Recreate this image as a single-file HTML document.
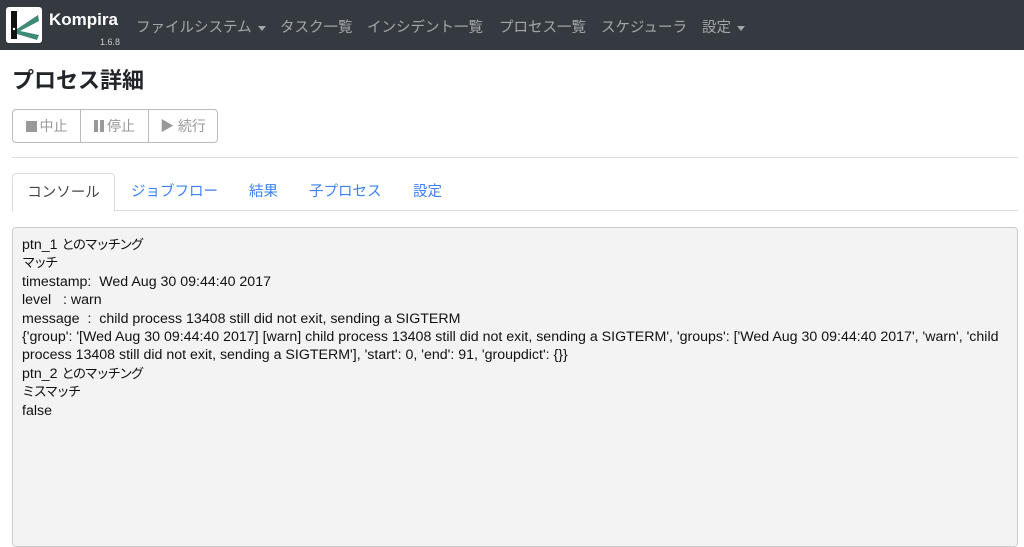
<!DOCTYPE html>
<html><head><meta charset="utf-8"><style>
*{box-sizing:border-box;margin:0;padding:0}
body{width:1024px;height:531px;overflow:hidden;background:#fff;font-family:"Liberation Sans","Noto Sans CJK JP",sans-serif;color:#212529}
.nav{height:50px;background:#343a40;position:relative}
.logo{position:absolute;left:6px;top:7px;width:36px;height:36px;background:#fff;border-radius:3px}
.brand{position:absolute;left:49px;top:10px;color:#fff;font-weight:bold;font-size:17px}
.ver{position:absolute;left:100px;top:37px;color:#ccc;font-size:9px}
.ni{position:absolute;top:16px;color:rgba(255,255,255,.55);font-size:14.5px}
.car{display:inline-block;border-left:4px solid transparent;border-right:4px solid transparent;border-top:5px solid rgba(255,255,255,.55);vertical-align:middle;margin-left:6px}
h1{position:absolute;left:12px;top:63px;font-size:22px;font-weight:bold}
.btns{position:absolute;left:12px;top:109px;height:34px;display:flex;border:1px solid #bbb;border-radius:4px;overflow:hidden}
.btns div{width:68px;color:#999;font-size:14px;line-height:32px;text-align:center;border-right:1px solid #bbb}
.btns div:last-child{border-right:0}
.ic{display:inline-block;vertical-align:-1px;margin-right:3px;background:#999}
.hr{position:absolute;left:12px;right:6px;top:157px;border-top:1px solid #ddd}
.tabs{position:absolute;left:12px;right:6px;top:173px;height:38px;border-bottom:1px solid #ddd}
.tab{position:absolute;top:0;font-size:14.5px;line-height:38px;color:#3b82f6}
.tab.act{left:0;width:103px;height:39px;border:1px solid #ddd;border-bottom-color:#fff;border-radius:4px 4px 0 0;background:#fff;color:#444;text-align:center}
.pre{position:absolute;left:12px;right:6px;top:227px;height:320px;background:#f3f3f3;border:1px solid #ccc;border-radius:4px;padding:8px 9px;font-size:14.2px;line-height:18.4px;color:#111}
.pre div{line-height:18.4px}
.pre div.h{height:18.4px;overflow:hidden}
.j{font-size:13.2px;line-height:1;letter-spacing:-1.6px}
</style></head><body>
<div class="nav">
<div class="logo"><svg width="36" height="36" viewBox="0 0 36 36"><rect x="5" y="4" width="6" height="28" fill="#111"/><circle cx="8" cy="22" r="1.2" fill="#fff"/><path d="M11 22 L32 8 L33 14 L14 24 L33 28 L31 33 L11 27Z" fill="#3f8a76"/></svg></div>
<div class="brand">Kompira</div><div class="ver">1.6.8</div>
<div class="ni" style="left:136px">ファイルシステム<span class="car"></span></div>
<div class="ni" style="left:280px">タスク一覧</div>
<div class="ni" style="left:367px">インシデント一覧</div>
<div class="ni" style="left:499px">プロセス一覧</div>
<div class="ni" style="left:601px">スケジューラ</div>
<div class="ni" style="left:702px">設定<span class="car"></span></div>
</div>
<h1>プロセス詳細</h1>
<div class="btns"><div><span class="ic" style="width:11px;height:11px"></span>中止</div><div><span class="ic" style="width:4px;height:12px;margin-right:2px"></span><span class="ic" style="width:4px;height:12px"></span>停止</div><div>▶ 続行</div></div>
<div class="hr"></div>
<div class="tabs">
<div class="tab act">コンソール</div>
<div class="tab" style="left:119px">ジョブフロー</div>
<div class="tab" style="left:237px">結果</div>
<div class="tab" style="left:297px">子プロセス</div>
<div class="tab" style="left:401px">設定</div>
</div>
<div class="pre">
<div class="h">ptn_1 <span class="j">とのマッチング</span></div>
<div class="h"><span class="j">マッチ</span></div>
<div>timestamp:&nbsp; Wed Aug 30 09:44:40 2017</div>
<div>level &nbsp;&nbsp;: warn</div>
<div>message &nbsp;: &nbsp;child process 13408 still did not exit, sending a SIGTERM</div>
<div>{'group': '[Wed Aug 30 09:44:40 2017] [warn] child process 13408 still did not exit, sending a SIGTERM', 'groups': ['Wed Aug 30 09:44:40 2017', 'warn', 'child process 13408 still did not exit, sending a SIGTERM'], 'start': 0, 'end': 91, 'groupdict': {}}</div>
<div class="h">ptn_2 <span class="j">とのマッチング</span></div>
<div class="h"><span class="j">ミスマッチ</span></div>
<div>false</div>
</div>
</body></html>
